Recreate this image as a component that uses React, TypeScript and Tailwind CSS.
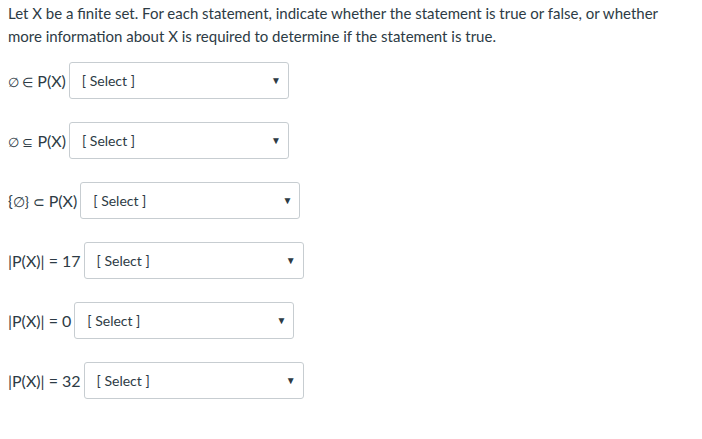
const rows = [
  { pre: "", sym: "∅ ∈", symCls: "text-[12.5px]", post: " P(X)" },
  { pre: "", sym: "∅ ⊆", symCls: "text-[13px]", post: " P(X)" },
  { pre: "{", sym: "∅} ⊂", symCls: "text-[14px]", post: " P(X)" },
  { pre: "|P(X)| = 17", sym: "", symCls: "", post: "" },
  { pre: "|P(X)| = 0", sym: "", symCls: "", post: "" },
  { pre: "|P(X)| = 32", sym: "", symCls: "", post: "" },
]

function SelectBox() {
  return (
    <div className="w-[220px] h-[37px] border border-[#c7cdd1] rounded-[3px] bg-white flex items-center justify-between pl-[12px] pr-[7px]">
      <span className="text-[14px] text-[#2d3b45]">[ Select ]</span>
      <span className="text-[10px] text-[#2d3b45]">▼</span>
    </div>
  )
}

export default function App() {
  return (
    <div
      className="w-[702px] h-[439px] bg-white px-2 pt-[2px] text-[#2d3b45]"
      style={{ fontFamily: "Lato, 'Noto Sans', sans-serif" }}
    >
      <p className="text-[15px] leading-[23px] m-0">
        Let X be a finite set. For each statement, indicate whether the statement is true or false, or whether more
        information about X is required to determine if the statement is true.
      </p>

      <div className="flex flex-col gap-[23px] mt-[14px]">
        {rows.map((r, i) => (
          <div key={i} className="flex items-center gap-[3px]">
            <span className="text-[16px] whitespace-pre">
              {r.pre}
              {r.sym && <span className={r.symCls}>{r.sym}</span>}
              {r.post}
            </span>
            <SelectBox />
          </div>
        ))}
      </div>
    </div>
  )
}
